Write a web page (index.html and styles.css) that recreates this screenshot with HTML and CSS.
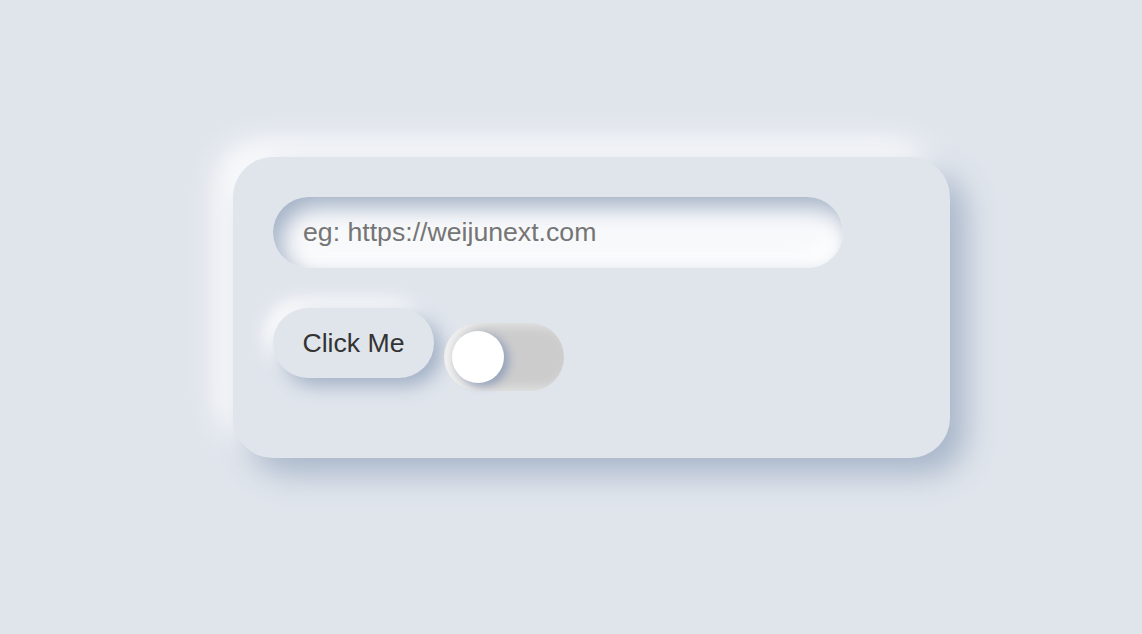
FILE: index.html
```html
<!DOCTYPE html>
<html lang="en">
<head>
<meta charset="utf-8">
<title>Neumorphism</title>
<link rel="stylesheet" href="styles.css">
</head>
<body>
  <main class="stage">
    <section class="card">
      <input class="url-input" type="text" placeholder="eg: https://weijunext.com">
      <div class="controls">
        <button class="btn" type="button">Click Me</button>
        <label class="toggle">
          <span class="knob"></span>
        </label>
      </div>
    </section>
  </main>
</body>
</html>
```
FILE: styles.css
```css
html, body {
  margin: 0;
  padding: 0;
}
body {
  background: #e0e5ec;
  font-family: "Liberation Sans", Arial, sans-serif;
  width: 1142px;
  height: 634px;
  overflow: hidden;
}
.stage {
  padding: 157px 0 0 233px;
}
.card {
  box-sizing: border-box;
  width: 717px;
  height: 301px;
  padding: 40px;
  border-radius: 40px;
  background: #e0e5ec;
  box-shadow: 16px 16px 30px rgba(163, 177, 198, 0.9),
              -16px -16px 30px rgba(255, 255, 255, 0.9);
}
.url-input {
  display: block;
  box-sizing: border-box;
  width: 570px;
  height: 71px;
  border: none;
  outline: none;
  border-radius: 36px;
  padding: 0 30px;
  font-family: "Liberation Sans", Arial, sans-serif;
  font-size: 26.67px;
  color: #333;
  background: #f8f9fb;
  box-shadow: inset 8px 10px 22px #a3b1c6,
              inset -10px -10px 20px #ffffff;
}
.url-input::placeholder {
  color: #757575;
}
.controls {
  display: flex;
  align-items: flex-start;
  margin-top: 40px;
}
.btn {
  box-sizing: border-box;
  height: 70px;
  width: 161px;
  border: none;
  border-radius: 35px;
  padding: 0 20px;
  font-family: "Liberation Sans", Arial, sans-serif;
  font-size: 26.67px;
  color: #333;
  background: #e0e5ec;
  box-shadow: 8px 8px 18px rgba(163, 177, 198, 1),
              -8px -8px 18px rgba(255, 255, 255, 0.95);
}
.toggle {
  box-sizing: border-box;
  display: flex;
  align-items: center;
  width: 120px;
  height: 68px;
  margin: 15px 0 0 10px;
  padding: 0 8px;
  border-radius: 34px;
  background: #cccccc;
  box-shadow: inset 10px 0 14px rgba(255, 255, 255, 0.75);
}
.knob {
  width: 52px;
  height: 52px;
  border-radius: 50%;
  background: #fff;
  box-shadow: 5px 3px 8px rgba(140, 155, 185, 0.85);
}
```
